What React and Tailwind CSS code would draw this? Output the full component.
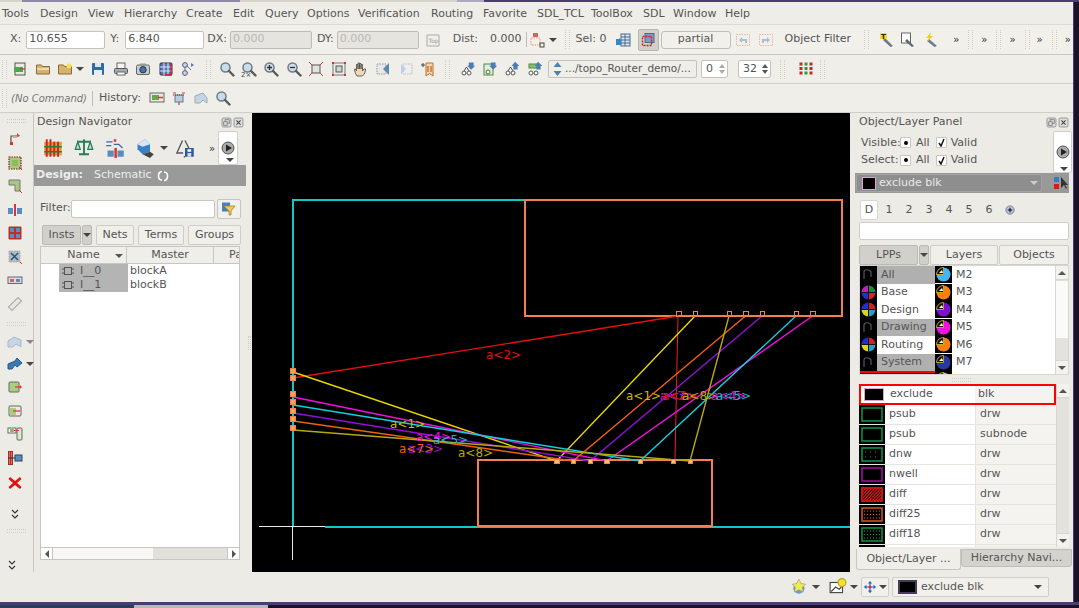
import React from "react";

const Svg = ({ children, s = 16, className = "" }) => (
  <svg width={s} height={s} viewBox="0 0 16 16" className={`shrink-0 ${className}`}>{children}</svg>
);

const Mag = ({ fill = "#c8dcec", extra }) => (
  <>
    <circle cx="6.5" cy="6.5" r="4.5" fill={fill} stroke="#6f7a84" strokeWidth="1.5" />
    <path d="M10 10l4.5 4.5" stroke="#5a5a5a" strokeWidth="2.4" strokeLinecap="round" />
    {extra}
  </>
);

const I = {
  doc: <><rect x="3" y="2" width="10" height="12" fill="#e8eae4" stroke="#555" /><rect x="2" y="6" width="9" height="5" fill="#4da84a" /><path d="M8 8h5" stroke="#c33" strokeWidth="1.2" /></>,
  folder: <><path d="M1.5 13V4h5l1 1.5h7V13z" fill="#d8b070" stroke="#8a6a3a" /><path d="M2 8h12" stroke="#efd9a8" strokeWidth="2" /></>,
  folderStar: <><path d="M1.5 13V4h5l1 1.5h7V13z" fill="#d8b070" stroke="#8a6a3a" /><circle cx="12" cy="5" r="2.5" fill="#f4e24a" /></>,
  floppy: <><rect x="2" y="2" width="12" height="12" rx="1" fill="#2f6aa8" /><rect x="5" y="2" width="6" height="4" fill="#dfe6ee" /><rect x="4" y="9" width="8" height="5" fill="#e9edf0" /></>,
  printer: <><rect x="4" y="2" width="8" height="6" fill="#f4f4f4" stroke="#666" /><rect x="1.5" y="7.5" width="13" height="5" rx="1" fill="#a8acb0" stroke="#555" /><rect x="4" y="11" width="8" height="3" fill="#fff" stroke="#666" /></>,
  camera: <><rect x="1.5" y="4" width="13" height="9.5" rx="1.5" fill="#c8ccd0" stroke="#666" /><circle cx="8" cy="8.7" r="3.2" fill="#3a78b8" stroke="#333" /><rect x="5" y="2.5" width="6" height="2" fill="#999" /></>,
  grid: <><rect x="2" y="2" width="12" height="12" rx="1" fill="#5a74b0" stroke="#334" /><path d="M6 2v12M10 2v12M2 6h12M2 10h12" stroke="#dfe6f4" /><path d="M13 3v11H7" stroke="#c22" strokeWidth="1.3" fill="none" /></>,
  hier: <><circle cx="5" cy="4" r="2.4" fill="#c8d8ea" stroke="#557" /><circle cx="5" cy="12" r="2.4" fill="#c8d8ea" stroke="#557" /><path d="M7 5l4 4M5 6.5v3" stroke="#667" /><path d="M11 2v4l3-2z" fill="#4a7db8" /></>,
  mag: <Mag />,
  mag2: <Mag extra={<text x="0" y="15.5" fontSize="7" fill="#444" fontFamily="DejaVu Sans">2×</text>} />,
  magP: <Mag extra={<path d="M4 6.5h5M6.5 4v5" stroke="#333" strokeWidth="1.3" />} />,
  magM: <Mag extra={<path d="M4 6.5h5" stroke="#333" strokeWidth="1.3" />} />,
  fit: <><rect x="4" y="4" width="8" height="8" fill="#dfe4dc" stroke="#555" /><path d="M1 1l3 3M15 1l-3 3M1 15l3-3M15 15l-3-3" stroke="#d33" /></>,
  fit2: <><rect x="2" y="2" width="12" height="12" fill="#eee" stroke="#777" /><rect x="5" y="5" width="6" height="6" fill="#cfd4cc" stroke="#555" /><path d="M1 1h2v2H1zM13 1h2v2h-2zM1 13h2v2H1zM13 13h2v2h-2z" fill="#d33" /></>,
  hand: <path d="M4 15c-2-3-2.500-5-2.500-7l1 0 1 2V3.500h1.500V8V2h1.500v6V2.500h1.500V8V3.500h1.500V10l1.500-2h1.500c0 3-1 5-3 7z" fill="#f0d8b4" stroke="#555" strokeWidth=".9" />,
  prev: <><rect x="2" y="3" width="9" height="10" fill="#e8e8e8" stroke="#999" strokeDasharray="1.500 1" /><path d="M14 2v12l-6-6z" fill="#5c86b4" /></>,
  next: <><rect x="5" y="3" width="9" height="10" fill="#eee" stroke="#bbb" strokeDasharray="1.500 1" /><path d="M3 3v10l5-5z" fill="#bcd0e2" /></>,
  mark: <><path d="M6 2h7v13l-3.500-2.500L6 15z" fill="#f4d8a8" stroke="#b8722a" /><path d="M1 4h4M3 2v4" stroke="#444" /><path d="M8 5v6M11 5v6" stroke="#c33" /></>,
  hdown: <><circle cx="4" cy="12" r="2" fill="#fff" stroke="#555" /><circle cx="9" cy="12" r="2" fill="#fff" stroke="#555" /><path d="M4 10l2.500-4L9 10" stroke="#555" fill="none" /><path d="M8 2h6v4h2l-5 5-5-5h2z" fill="#4a7db8" transform="scale(.8) translate(3 0)" /></>,
  hdown2: <><rect x="2" y="3" width="9" height="11" fill="#e6ecd8" stroke="#4a8a4a" /><circle cx="6" cy="11" r="2" fill="#fff" stroke="#2a7a2a" /><path d="M8 2h6v4h2l-5 5-5-5h2z" fill="#4a7db8" transform="scale(.8) translate(3 0)" /></>,
  hup: <><circle cx="4" cy="12" r="2" fill="#fff" stroke="#555" /><circle cx="9" cy="12" r="2" fill="#fff" stroke="#555" /><path d="M4 10l2.500-4L9 10" stroke="#555" fill="none" /><path d="M11 1l5 5h-2v4H9V6H7z" fill="#4a7db8" transform="scale(.85) translate(2 0)" /></>,
  hup2: <><rect x="2" y="3" width="9" height="4" fill="#8cc070" stroke="#4a8a4a" /><circle cx="4" cy="12" r="2" fill="#fff" stroke="#555" /><circle cx="9" cy="12" r="2" fill="#fff" stroke="#555" /><path d="M11 1l5 5h-2v4H9V6H7z" fill="#4a7db8" transform="scale(.85) translate(2 0)" /></>,
  dots: <>{[3, 7.500, 12].map((y) => [3, 8, 13].map((x, i) => <rect key={`${x}-${y}`} x={x - 1.5} y={y - 1.5} width="3" height="3" fill={i === 1 ? "#2a9a3a" : "#c02a20"} />))}</>,
  top: <><path d="M2 3h12M2 14h12M2 3v11M14 3v11" stroke="#aaa" /><text x="3.500" y="11" fontSize="6" fill="#999" fontFamily="DejaVu Sans">Top</text></>,
  layerT: <><rect x="3" y="1" width="5" height="4" fill="#d86060" /><rect x="1" y="6" width="9" height="7" fill="none" stroke="#d8a070" strokeDasharray="1.500 1" /><rect x="10" y="11" width="4" height="4" fill="none" stroke="#444" /></>,
  tile: <><rect x="6" y="2" width="9" height="12" fill="#dfe6ee" stroke="#4a6a90" /><path d="M6 5h9M6 8h9M6 11h9M10 2v12" stroke="#4a6a90" /><path d="M5 6v2H1v3h4v2l-4-3.500z" fill="#2f8ad0" /><rect x="1" y="7" width="5" height="6" fill="#2f8ad0" /></>,
  sel: <><rect x="5" y="1.500" width="9" height="9" fill="#7d9bc2" stroke="#4a6a90" /><rect x="2.500" y="4.500" width="9" height="9" fill="none" stroke="#c22" strokeWidth="1.4" strokeDasharray="2 1" /></>,
  undo: <><rect x="1.500" y="2.500" width="13" height="11" fill="none" stroke="#e8b8a0" strokeDasharray="1.500 1" /><path d="M4 8l3-3v2h5v4h-2V9H7v2z" fill="#a8c0d6" /></>,
  redo: <><rect x="1.500" y="2.500" width="13" height="11" fill="none" stroke="#e8b8a0" strokeDasharray="1.500 1" /><path d="M12 8L9 5v2H4v4h2V9h3v2z" fill="#a8c0d6" /></>,
  torchT: <><path d="M6 6l8 8-2.500 1L4 8z" fill="#6a7a8a" /><rect x="1" y="1" width="7" height="6" fill="#f0e020" /><text x="2" y="6.500" fontSize="7" fontWeight="bold" fill="#222" fontFamily="DejaVu Sans">T</text></>,
  torchS: <><rect x="1.500" y="1" width="9" height="10" fill="#fff" stroke="#666" /><path d="M7 7l7 7-2 1-7-6z" fill="#5a6a7a" /></>,
  torchL: <><path d="M6 7l8 7-2.500 1L4 9z" fill="#6a7a8a" /><path d="M8 0L3 6h3L4 10l6-6H7z" fill="#f0d020" /></>,
  hist1: <><rect x="1" y="3" width="14" height="9" fill="#e8e8e0" stroke="#666" /><rect x="3" y="5" width="7" height="5" fill="#66a84a" /><path d="M9 7.500h5" stroke="#d33" strokeWidth="1.5" /></>,
  hist2: <><rect x="4" y="5" width="8" height="7" fill="#b8cde0" stroke="#607890" /><path d="M2 3h3M11 3h3M8 12v3" stroke="#d33" strokeWidth="1.2" /><path d="M2 5h12" stroke="#444" strokeDasharray="1 1" /></>,
  hist3: <path d="M2 13V6l8-3 4 5v5l-4-3-3 3z" fill="#c4d6e4" stroke="#9ab" />,
  route: <><path d="M4 14V5h6" stroke="#555" strokeWidth="1.2" fill="none" /><path d="M3 11h3v3H3z" fill="#d33" /><path d="M10 2l3 3-3 1z" fill="#d33" /><path d="M6 5h4v2H6z" fill="#caa" /></>,
  green: <><rect x="2" y="2" width="12" height="12" fill="#a8c880" stroke="#7a1f1f" strokeDasharray="1.500 1" strokeWidth="1.2" /><rect x="5" y="5" width="6" height="6" fill="#8cbc5c" /><path d="M12 12l3 3" stroke="#d33" /></>,
  ell: <><path d="M2 2h11v11H8V7H2z" fill="#a8c880" stroke="#777" /><path d="M12 12l3 3" stroke="#d33" /></>,
  cut: <><rect x="1" y="6" width="5" height="6" fill="#5a8cc4" /><rect x="10" y="6" width="5" height="6" fill="#5a8cc4" /><path d="M8 2v12" stroke="#d33" strokeWidth="2" /></>,
  quad: <><rect x="1.500" y="1.500" width="13" height="13" rx="1" fill="#c42a2a" /><rect x="3" y="3" width="4" height="4" fill="#5a8cc4" /><rect x="9" y="3" width="4" height="4" fill="#5a8cc4" /><rect x="3" y="9" width="4" height="4" fill="#5a8cc4" /><rect x="9" y="9" width="4" height="4" fill="#5a8cc4" /></>,
  cross: <><rect x="2" y="2" width="11" height="11" fill="#a8bcd4" stroke="#c98" strokeDasharray="1.500 1" /><path d="M4 4l7 7M11 4l-7 7" stroke="#356" strokeWidth="1.500" /><path d="M13 13l2 2" stroke="#d33" /></>,
  chip: <><rect x="1" y="5" width="14" height="6.500" fill="#d8dce0" stroke="#667" /><rect x="3" y="7" width="4" height="3" fill="#c66" /><rect x="9" y="7" width="4" height="3" fill="#68a" /></>,
  ruler: <path d="M1.500 11L11 1.500l3.500 3.500L5 14.500z" fill="#e6e6e2" stroke="#888" />,
  undoB: <path d="M1 13V7l6-4 7 3v7l-5-3-3 3z" fill="#c6d6e4" stroke="#a8b8c8" />,
  redoB: <><path d="M1 13V8l7-3 2-3 5 5-5 4-2-2-3 4z" fill="#3a78b8" stroke="#245a90" /></>,
  out1: <><rect x="2" y="3" width="10" height="10" rx="1" fill="#a8cf80" stroke="#666" /><path d="M8 8h6" stroke="#e33" strokeWidth="1.300" /><path d="M13 6l2 2-2 2z" fill="#e33" /></>,
  out2: <><rect x="2" y="3" width="12" height="10" rx="1" fill="#e8e8e4" stroke="#666" /><rect x="3" y="5" width="6" height="7" fill="#a8cf80" /><path d="M6 8h7" stroke="#e33" strokeWidth="1.300" /></>,
  out3: <><rect x="1" y="2" width="8" height="5" fill="#fff" stroke="#666" /><rect x="10" y="2" width="5" height="12" rx="1" fill="#d8e8c8" stroke="#666" /><rect x="3" y="3" width="4" height="3" fill="#8cbc5c" /><path d="M7 4.500h5" stroke="#e33" /></>,
  out4: <><rect x="1.500" y="1.500" width="4" height="13" fill="#e08060" stroke="#933" /><path d="M3.500 1v14" stroke="#c22" strokeWidth="1.300" /><rect x="8" y="5" width="7" height="6" fill="#5a8cc4" stroke="#345" /><path d="M1 8h7" stroke="#333" /></>,
  x: <path d="M3 2l5 4 5-4 1.500 2L10 8l4.500 4-1.500 2-5-4-5 4-1.500-2L6 8 1.500 4z" fill="#dd1111" />,
  down: <path d="M5 3l3 3 3-3M5 8l3 3 3-3" stroke="#333" fill="none" strokeWidth="1.100" />,
  bars: <><rect x="1" y="3" width="14" height="11" fill="#d8a040" /><path d="M3 1v14M6 1v14M9 3v12M12 3v12" stroke="#c22" strokeWidth="1.500" /><path d="M1 7h14M1 11h14" stroke="#2a7a3a" strokeWidth="1.300" /></>,
  scale: <><path d="M8 1v12M3 3h10M4 13h8" stroke="#2a7a5a" strokeWidth="1.500" /><path d="M3 3l-2 6h4zM13 3l-2 6h4z" fill="#b8e0d0" stroke="#2a7a5a" /></>,
  net: <><path d="M1 3h5M1 6h4M7 5h4l3 3" stroke="#3a68a8" fill="none" /><rect x="7" y="1" width="2" height="2" fill="#d33" /><rect x="2" y="10" width="5" height="5" fill="#5a8cc4" /><rect x="10" y="10" width="5" height="5" fill="#5a8cc4" /><path d="M8.500 8v8" stroke="#d33" strokeWidth="2" /></>,
  cube: <><path d="M2 5l6-4 4 4 0 6-6 2-4-4z" fill="#3a80c8" /><path d="M6 13l6-2 3 2-3 3z" fill="#444" /><path d="M2 5l6-4 4 4-6 2z" fill="#d8e6f4" /></>,
  recycle: <><path d="M6 2L1.500 12h5M8 2l3 6M8 15h-1" stroke="#556" fill="none" strokeWidth="1.100" /><rect x="8" y="8" width="7" height="7" fill="#2f5a98" /><rect x="10" y="9" width="3" height="2" fill="#fff" /><rect x="10" y="12" width="3" height="3" fill="#cde" /></>,
  play: <><circle cx="8" cy="8" r="6" fill="#aaa" stroke="#555" /><path d="M6 4.500l6 3.500-6 3.500z" fill="#222" /></>,
  filter: <><rect x="1" y="1.500" width="8" height="9" fill="#4a80b8" /><path d="M3 5h11l-4 5v4H8v-4z" fill="#f0c860" stroke="#a88030" strokeWidth=".8" /></>,
  cursor: <><rect x="1" y="2" width="5" height="5" fill="#3a78c8" /><rect x="1" y="9" width="5" height="5" fill="#e01818" /><path d="M8 2v11l3-3 2 4 1-1-2-3h3z" fill="#333" /></>,
  plus: <><circle cx="8" cy="8" r="5.500" fill="#b4c8e4" stroke="#667" /><path d="M5 8h6M8 5v6" stroke="#111" strokeWidth="1.500" /></>,
  starG: <><circle cx="7" cy="9" r="5" fill="#6a9ad0" /><path d="M7 1l2 4 4 .5-3 3 1 4-4-2-4 2 1-4-3-3 4-.5z" fill="#f2ea4a" stroke="#999" strokeWidth=".6" /></>,
  bulb: <><rect x="1" y="4" width="11" height="9" fill="#fff" stroke="#444" /><path d="M2 12l4-4 3 2 2-2" stroke="#444" fill="none" /><circle cx="11.500" cy="4" r="3.500" fill="#f2e030" stroke="#b8a020" /></>,
  cross4: <><path d="M8 1l2.500 3h-5zM8 15l2.500-3h-5zM1 8l3-2.500v5zM15 8l-3-2.500v5z" fill="#2a5fd0" /><path d="M8 3v10M3 8h10" stroke="#2a5fd0" strokeWidth="1.400" /><circle cx="8" cy="8" r="1.800" fill="#d33" /></>,
  float: <><rect x="1.500" y="1.500" width="13" height="13" rx="2" fill="#ddd" stroke="#777" /><rect x="6" y="4" width="6" height="5" fill="none" stroke="#666" /><rect x="4" y="7" width="5" height="5" fill="#ddd" stroke="#666" /></>,
  close: <><rect x="1.500" y="1.500" width="13" height="13" rx="2" fill="#ddd" stroke="#777" /><path d="M5 5l6 6M11 5l-6 6" stroke="#444" strokeWidth="1.500" /></>,
};

const Ic = ({ n, s = 16, w, className = "" }) => (
  <span className={`flex justify-center shrink-0 ${className}`} style={w ? { width: w } : undefined}>
    <Svg s={s}>{I[n]}</Svg>
  </span>
);

const Caret = ({ c = "border-t-[#444]", className = "" }) => (
  <span className={`w-0 h-0 border-x-[4px] border-x-transparent border-t-[4px] shrink-0 ${c} ${className}`} />
);

const GripV = ({ className = "" }) => <span className={`w-[5px] h-[19px] shrink-0 border-x border-dotted border-[#cfccc6] ${className}`} />;
const GripH = ({ className = "" }) => <span className={`h-[4px] w-[19px] shrink-0 border-y border-dotted border-[#cfccc6] ${className}`} />;

const T = ({ children, className = "" }) => <span className={`whitespace-nowrap shrink-0 ${className}`}>{children}</span>;

const Field = ({ w, v, disabled, className = "" }) => (
  <span className={`flex items-center h-[18px] rounded-[2px] border px-[2px] shrink-0 ${disabled ? "bg-[#e6e4df] border-[#bdbbb6] text-[#b8b8b4]" : "bg-white border-[#c4c2bc] text-[#555]"} ${className}`} style={{ width: w }}>{v}</span>
);

const Btn = ({ children, w, active, className = "" }) => (
  <span className={`flex items-center justify-center h-[20px] rounded-[2px] border shrink-0 ${active ? "bg-[#d2d0cb] border-[#bbb9b3]" : "bg-[#f1efea] border-[#cfcdc7]"} ${className}`} style={{ width: w }}>{children}</span>
);

const menus = [["Tools", 2], ["Design", 40], ["View", 88], ["Hierarchy", 124], ["Create", 186], ["Edit", 233], ["Query", 265], ["Options", 307], ["Verification", 358], ["Routing", 431], ["Favorite", 483], ["SDL_TCL", 537], ["ToolBox", 591], ["SDL", 643], ["Window", 673], ["Help", 725]];

const leftIcons = ["route", "green", "ell", "cut", "quad", "cross", "chip", "ruler"];
const leftIcons2 = ["out1", "out2", "out3", "out4", "x"];

const Pie = ({ c, wedge = "#111" }) => (
  <svg width="17" height="17" viewBox="0 0 17 17" className="shrink-0">
    <rect width="17" height="17" fill="#000" />
    <circle cx="8.500" cy="8.500" r="7" fill={c} />
    <path d="M8.500 8.500V1.500A7 7 0 0 0 1.500 8.500z" fill={wedge} stroke="#d8c020" strokeWidth=".8" />
    <path d="M4 7l3-3 1 3z" fill="#fff" />
  </svg>
);
const Arc = () => (
  <svg width="17" height="17" viewBox="0 0 17 17" className="shrink-0">
    <rect width="17" height="17" fill="#000" />
    <path d="M4 13V6c0-3 6-3 7 0v5" stroke="#556" strokeWidth="1.200" fill="none" />
  </svg>
);
const Multi = () => (
  <svg width="17" height="17" viewBox="0 0 17 17" className="shrink-0">
    <rect width="17" height="17" fill="#000" />
    <path d="M8.500 8.500V1.500A7 7 0 0 1 15.500 8.500z" fill="#1a8a3a" />
    <path d="M8.500 8.500H15.500A7 7 0 0 1 8.500 15.500z" fill="#e02020" />
    <path d="M8.500 8.500V15.500A7 7 0 0 1 1.500 8.500z" fill="#2030d0" />
    <path d="M8.500 8.500H1.500A7 7 0 0 1 8.500 1.500z" fill="#c020c0" />
    <path d="M1.500 8.500h14M8.500 1.500v14" stroke="#111" />
  </svg>
);
const Multi2 = () => (
  <svg width="17" height="17" viewBox="0 0 17 17" className="shrink-0">
    <rect width="17" height="17" fill="#000" />
    <path d="M8.500 8.500V1.500A7 7 0 0 1 15.500 8.500z" fill="#d02020" />
    <path d="M8.500 8.500H15.500A7 7 0 0 1 8.500 15.500z" fill="#20a0d0" />
    <path d="M8.500 8.500V15.500A7 7 0 0 1 1.500 8.500z" fill="#e0d020" />
    <path d="M8.500 8.500H1.500A7 7 0 0 1 8.500 1.500z" fill="#2030d0" />
    <path d="M1.500 8.500h14M8.500 1.500v14" stroke="#111" />
  </svg>
);

const lpp = [
  ["All", <Arc />, 1], ["Base", <Multi />], ["Design", <Multi2 />], ["Drawing", <Arc />, 1], ["Routing", <Multi2 />], ["System", <Arc />, 1],
];
const metals = [["M2", "#40b8f8"], ["M3", "#f88010"], ["M4", "#8010d0"], ["M5", "#f010e0"], ["M6", "#f88010"], ["M7", "#2838a0"], ["M8", "#e0d020"]];

const Swatch = ({ c, p }) => (
  <span className="flex items-center justify-center w-[26px] h-[19px] bg-black shrink-0">
    <svg width="22" height="15" viewBox="0 0 22 15">
      {p === "hatch" && Array.from({ length: 12 }).map((_, i) => <path key={i} d={`M${i * 3 - 14} 15L${i * 3} 0`} stroke={c} strokeWidth="1.300" />)}
      {p === "dots" && [4, 7.500, 11].map((y) => <path key={y} d={`M3 ${y}H19`} stroke={c} strokeDasharray="1 2" />)}
      {p === "sparse" && [5, 10].map((y) => <path key={y} d={`M4 ${y}H18`} stroke={c} strokeDasharray="1 4" />)}
      <rect x="1" y="1" width="20" height="13" fill="none" stroke={c} strokeWidth="1.400" />
    </svg>
  </span>
);

const rows = [
  ["psub", "drw", "#10a050"], ["psub", "subnode", "#10a050"], ["dnw", "drw", "#10a050", "sparse"], ["nwell", "drw", "#b010b0"],
  ["diff", "drw", "#e01818", "hatch"], ["diff25", "drw", "#e06020", "dots"], ["diff18", "drw", "#10a050", "dots"], ["", "", "#b010b0"],
];

const ScrollV = ({ thumbH, thumbTop }) => (
  <div className="w-[13px] shrink-0 flex flex-col border-l border-[#d8d6d0] bg-[#f4f2ee]">
    <div className="h-[14px] flex items-center justify-center border-b border-[#d8d6d0]"><span className="w-0 h-0 border-x-[4px] border-x-transparent border-b-[4px] border-b-[#555]" /></div>
    <div className="flex-1 min-h-0 flex flex-col">
      <div style={{ height: thumbTop }} className="bg-[#fafaf8] border-b border-[#e0ded8]" />
      <div style={{ height: thumbH }} className="bg-[#fafaf8]" />
      <div className="flex-1 bg-[#e4e2dd]" />
    </div>
    <div className="h-[14px] flex items-center justify-center border-t border-[#d8d6d0]"><Caret c="border-t-[#555]" /></div>
  </div>
);

const topPins = [678.5, 695, 729, 745.5, 762, 796, 812.5];
const botPins = [556.5, 573, 590, 606.5, 640, 673, 690];
const leftPins = [371, 378, 394, 402, 411, 419, 428];

const Canvas = () => (
  <svg width="598" height="459" viewBox="252 113 598 459" className="block bg-black shrink-0" shapeRendering="crispEdges" style={{ fontFamily: "'DejaVu Sans', sans-serif" }}>
    <path d="M292.500 526V199.500H525" stroke="#10c8c8" fill="none" strokeWidth="2" />
    <path d="M325 526.500H850" stroke="#10c8c8" strokeWidth="2" />
    <path d="M711.500 459V526" stroke="#10c8c8" strokeWidth="2" />
    <path d="M259 526.500H325M292.500 526V560" stroke="#e8e8e8" />
    <rect x="525" y="199.500" width="317" height="116" fill="none" stroke="#f08050" strokeWidth="2" />
    <rect x="477.500" y="459.500" width="234" height="66.500" fill="none" stroke="#f08050" strokeWidth="2" />
    <g fill="none" strokeWidth="1.400" shapeRendering="auto">
      <path d="M293 378L678.500 316" stroke="#e01010" />
      <path d="M678 316L675 459" stroke="#f02020" strokeWidth="1" />
      <path d="M293 372L556.500 461L695 316" stroke="#e8d800" />
      <path d="M293 397L606.500 461L812.500 316" stroke="#f010e0" />
      <path d="M293 405L640 461L796 316" stroke="#10d0e0" />
      <path d="M293 413L590 461L762 316" stroke="#9010d8" />
      <path d="M293 421L573 461L745.500 316" stroke="#f06010" />
      <path d="M293 430L690 461L729 316" stroke="#b8a810" />
    </g>
    {topPins.map((x) => <rect key={x} x={x - 2} y="311.500" width="4.500" height="4.500" fill="none" stroke="#f08050" />)}
    {botPins.map((x) => <rect key={x} x={x - 2} y="459" width="4.500" height="4.500" fill="#f8c070" stroke="#f08050" />)}
    {leftPins.map((y) => <rect key={y} x="290" y={y - 2.5} width="5" height="5" fill="#f8a060" stroke="#f08050" />)}
    <g fontSize="12" shapeRendering="auto">
      <text x="486" y="359" fill="#e01010">a&lt;2&gt;</text>
      <text x="390" y="428" fill="#c8b800">a&lt;1&gt;</text>
      <text x="416" y="441" fill="#f010e0">a&lt;4&gt;</text>
      <text x="433" y="444" fill="#10b8c8">a&lt;5&gt;</text>
      <text x="408" y="453" fill="#9010d8">a&lt;3&gt;</text>
      <text x="399" y="453" fill="#e86010">a&lt;7&gt;</text>
      <text x="458" y="457" fill="#b8a810">a&lt;8&gt;</text>
      <text x="626" y="400" fill="#c8b800">a&lt;1&gt;</text>
      <text x="660" y="400" fill="#e86010">a&lt;7&gt;</text>
      <text x="660" y="400" fill="#9010d8">a&lt;3&gt;</text>
      <text x="662" y="400" fill="#e01010">a&lt;2&gt;</text>
      <text x="682" y="400" fill="#b8a810">a&lt;8&gt;</text>
      <text x="711" y="400" fill="#f010e0">a&lt;4&gt;</text>
      <text x="716" y="400" fill="#10b8c8">a&lt;5&gt;</text>
    </g>
  </svg>
);

export default function App() {
  return (
    <div className="relative w-[1079px] h-[608px] overflow-hidden bg-[#1a1226] text-[11px] text-[#555]" style={{ fontFamily: "'DejaVu Sans', sans-serif" }}>
      <div className="flex h-[2px] bg-[#d8d4cc]">
        <div className="w-[22px]" />
        <div className="w-[218px] bg-[#9088a8]" />
        <div className="w-[217px]" />
        <div className="w-[27px] bg-[#b0a8c0]" />
        <div className="flex-1 bg-[#4d3d6e]" />
      </div>
      <div className="flex flex-col w-[1074px] h-[600px] bg-[#edebe6] border-r border-[#4d3d6e]">
        {/* menu */}
        <div className="relative h-[23px] border-b border-[#dcdad4] bg-[#efede8] shrink-0">
          {menus.map(([m, x]) => <span key={m} className="absolute top-[4px] whitespace-nowrap" style={{ left: x }}>{m}</span>)}
        </div>
        {/* toolbar 1 */}
        <div className="flex items-center h-[30px] border-b border-[#c8c6c0] bg-[#f2f0eb] shrink-0 pl-[10px]">
          <T>X:</T><Field w={79} v="10.655" className="ml-[5px]" />
          <T className="ml-[5px]">Y:</T><Field w={79} v="6.840" className="ml-[6px]" />
          <T className="ml-[3px]">DX:</T><Field w={82} v="0.000" disabled className="ml-[3px]" />
          <T className="ml-[5px]">DY:</T><Field w={82} v="0.000" disabled className="ml-[3px]" />
          <Ic n="top" w={16} className="ml-[6px]" />
          <T className="ml-[12px]">Dist:</T><T className="ml-[12px]">0.000</T>
          <span className="w-px h-[15px] bg-[#bbb] ml-[4px]" />
          <Ic n="layerT" w={16} className="ml-[3px]" />
          <Caret className="ml-[3px]" />
          <GripV className="ml-[8px]" />
          <T className="ml-[6px]">Sel: 0</T>
          <Ic n="tile" w={16} className="ml-[8px]" />
          <span className="flex items-center justify-center w-[21px] h-[22px] ml-[7px] rounded-[2px] bg-[#d2d0cb] border border-[#b8b6b0] shrink-0"><Svg>{I.sel}</Svg></span>
          <span className="flex items-center justify-center w-[70px] h-[18px] ml-[2px] rounded-[3px] bg-[#f2f0eb] border border-[#c0beb8] shrink-0">partial</span>
          <Ic n="undo" w={16} className="ml-[4px]" />
          <Ic n="redo" w={16} className="ml-[7px]" />
          <T className="ml-[11px]">Object Filter</T>
          <GripV className="ml-[13px]" />
          <Ic n="torchT" w={16} className="ml-[10px]" />
          <Ic n="torchS" w={16} className="ml-[5px]" />
          <Ic n="torchL" w={16} className="ml-[7px]" />
          <T className="ml-[14px] text-[10px] text-[#333]">»</T>
          <GripV className="ml-[9px]" />
          <T className="ml-[8px] text-[10px] text-[#333]">»</T>
          <GripV className="ml-[9px]" />
          <T className="ml-[8px] text-[10px] text-[#333]">»</T>
          <GripV className="ml-[9px]" />
          <T className="ml-[7px] text-[10px] text-[#333]">»</T>
          <GripV className="ml-[9px]" />
          <T className="ml-[8px] text-[10px] text-[#333]">»</T>
        </div>
        {/* toolbar 2 */}
        <div className="flex items-center h-[29px] border-b border-[#d0cec8] bg-[#f0eee9] shrink-0 pl-[2px]">
          <GripV className="mr-[2px]" />
          {["doc", "folder"].map((n) => <Ic key={n} n={n} w={22.5} />)}
          <Ic n="folderStar" w={22} />
          <Caret />
          <span className="w-[3px]" />
          {["floppy", "printer", "camera", "grid", "hier"].map((n) => <Ic key={n} n={n} w={22.5} />)}
          <GripV className="ml-[6px] mr-[5px]" />
          {["mag", "mag2", "magP", "magM", "fit", "fit2", "hand", "prev", "next", "mark"].map((n) => <Ic key={n} n={n} w={22.4} />)}
          <GripV className="ml-[6px] mr-[6px]" />
          {["hdown", "hdown2", "hup", "hup2"].map((n) => <Ic key={n} n={n} w={22.4} />)}
          <span className="flex items-center w-[149px] h-[18px] ml-[2px] rounded-[2px] border border-[#c4c2bc] bg-[#f0eee9] px-[4px] gap-[3px] shrink-0 overflow-hidden">
            <svg width="9" height="14" viewBox="0 0 9 14" className="shrink-0"><path d="M4.500 0l4 5H.5zM4.500 14l4-5H.5z" fill="#4a80b8" /></svg>
            <T className="text-[#555] text-[10.500px]">.../topo_Router_demo/...</T>
          </span>
          <span className="flex items-center justify-between w-[27px] h-[18px] ml-[4px] pl-[4px] pr-[2px] rounded-[2px] border border-[#c4c2bc] bg-white shrink-0">0<span className="flex flex-col gap-[2px]"><span className="w-0 h-0 border-x-[3px] border-x-transparent border-b-[4px] border-b-[#aaa]" /><span className="w-0 h-0 border-x-[3px] border-x-transparent border-t-[4px] border-t-[#aaa]" /></span></span>
          <span className="flex items-center justify-between w-[33px] h-[18px] ml-[10px] pl-[4px] pr-[2px] rounded-[2px] border border-[#c4c2bc] bg-white shrink-0">32<span className="flex flex-col gap-[2px]"><span className="w-0 h-0 border-x-[3px] border-x-transparent border-b-[4px] border-b-[#555]" /><span className="w-0 h-0 border-x-[3px] border-x-transparent border-t-[4px] border-t-[#555]" /></span></span>
          <GripV className="ml-[9px]" />
          <Ic n="dots" w={16} className="ml-[13px]" />
          <GripV className="ml-[6px]" />
        </div>
        {/* toolbar 3 */}
        <div className="flex items-center h-[29px] border-b border-[#d0cec8] bg-[#f0eee9] shrink-0 pl-[2px]">
          <GripV />
          <T className="ml-[4px] w-[80px] italic text-[#777] text-[10px]">(No Command)</T>
          <span className="w-px h-[15px] bg-[#bbb] ml-[1px]" />
          <T className="ml-[6px]">History:</T>
          <Ic n="hist1" w={16} className="ml-[8px]" />
          <Ic n="hist2" w={16} className="ml-[6px]" />
          <Ic n="hist3" w={16} className="ml-[6px]" />
          <Ic n="mag" w={16} className="ml-[6px]" />
        </div>
        {/* main */}
        <div className="flex h-[459px] shrink-0">
          {/* left strip */}
          <div className="flex flex-col items-start w-[34px] border-r border-[#c8c6c0] pl-[7px] pt-[6px] shrink-0">
            <GripH className="mb-[7px]" />
            {leftIcons.map((n, i) => <Ic key={n} n={n} className={i ? "mt-[7.500px]" : "mt-[1px]"} />)}
            <GripH className="mt-[10px]" />
            <span className="flex items-center gap-[3px] mt-[8px]"><Svg>{I.undoB}</Svg><Caret c="border-t-[#888]" /></span>
            <span className="flex items-center gap-[3px] mt-[6px]"><Svg>{I.redoB}</Svg><Caret /></span>
            {leftIcons2.map((n, i) => <Ic key={n} n={n} className={i === 4 ? "mt-[9px]" : "mt-[7.500px]"} />)}
            <Ic n="down" className="mt-[16px]" />
            <GripH className="mt-[6px]" />
            <Ic n="down" className="mt-[25px] -ml-[3px]" />
          </div>
          {/* navigator */}
          <div className="flex flex-col w-[212px] shrink-0">
            <div className="flex items-center h-[18px] pt-[1px] pl-[3px] pr-[2px] shrink-0">
              <T>Design Navigator</T>
              <span className="flex-1" />
              <Svg s={11}>{I.float}</Svg><Svg s={11} className="ml-[1px]">{I.close}</Svg>
            </div>
            <div className="flex items-center h-[34px] shrink-0">
              <Ic n="bars" s={20} w={36} className="ml-[1px]" />
              <Ic n="scale" s={20} w={26} />
              <Ic n="net" s={20} w={36} />
              <Ic n="cube" s={20} w={24} />
              <Caret className="ml-[3px]" />
              <Ic n="recycle" s={20} w={24} className="ml-[5px]" />
              <T className="ml-[12px] text-[10px] text-[#333]">»</T>
              <span className="relative flex items-center justify-center w-[20px] h-[34px] ml-[3px] rounded-[2px] bg-white border border-[#d0cec8] shrink-0"><Svg>{I.play}</Svg><Caret className="absolute bottom-[2px] right-[3px]" /></span>
            </div>
            <div className="flex items-center h-[21px] bg-[#9a9a9a] text-[#eee] shrink-0 pl-[2px]">
              <T className="font-bold">Design:</T><T className="ml-[11px]">Schematic</T>
              <svg width="12" height="12" viewBox="0 0 12 12" className="ml-[5px] shrink-0"><path d="M5 1.500C2 1.500 1.500 4 1.500 6S2.500 10 5 10M7 10.500c3 0 3.500-2.500 3.500-4.500S9.500 2 7 2" stroke="#fff" strokeWidth="1.600" fill="none" /></svg>
            </div>
            <div className="flex items-center mt-[14px] h-[17px] shrink-0 pl-[6px]">
              <T>Filter:</T>
              <span className="w-[144px] h-[18px] bg-white rounded-[2px] border border-[#c8c6c0] shrink-0" />
              <span className="flex items-center justify-center w-[24px] h-[20px] ml-[2px] bg-[#f2f0eb] border border-[#c8c6c0] rounded-[2px] shrink-0"><Svg>{I.filter}</Svg></span>
            </div>
            <div className="flex items-center mt-[8px] h-[20px] shrink-0 pl-[8px]">
              <Btn w={39} active>Insts</Btn>
              <span className="flex items-center justify-center w-[10px] h-[20px] ml-[1px] bg-[#d2d0cb] border border-[#bbb9b3] rounded-[2px] shrink-0"><Caret /></span>
              <Btn w={38} className="ml-[4px]">Nets</Btn>
              <Btn w={46} className="ml-[4px]">Terms</Btn>
              <Btn w={53} className="ml-[4px]">Groups</Btn>
            </div>
            <div className="flex flex-col ml-[6px] mt-[1px] w-[200px] h-[314px] bg-white border border-[#c8c6c0] shrink-0 overflow-hidden">
              <div className="flex items-center h-[17px] bg-[#f0eee9] border-b border-[#c8c6c0] shrink-0">
                <span className="relative flex items-center justify-center w-[86px] h-full border-r border-[#c8c6c0] shrink-0">Name<Caret className="absolute right-[3px] top-[7px]" c="border-t-[#555]" /></span>
                <span className="flex items-center justify-center w-[87px] h-full border-r border-[#c8c6c0] shrink-0">Master</span>
                <span className="pl-[15px]">Pa</span>
              </div>
              {[["I__0", "blockA"], ["I__1", "blockB"]].map(([a, b]) => (
                <div key={a} className="flex items-center h-[14px] shrink-0">
                  <span className="flex items-center w-[69px] h-full ml-[18px] bg-[#b4b4b4] shrink-0">
                    <svg width="12" height="10" viewBox="0 0 12 10" className="ml-[3px] shrink-0"><rect x="2.500" y="1.500" width="7" height="7" fill="none" stroke="#555" /><path d="M0 3h2M0 7h2M10 3h2M10 7h2" stroke="#555" /></svg>
                    <span className="ml-[6px]">{a}</span>
                  </span>
                  <span className="ml-[2px]">{b}</span>
                </div>
              ))}
              <div className="flex-1" />
              <div className="flex h-[12px] border-t border-[#c8c6c0] shrink-0">
                <span className="flex items-center justify-center w-[12px] border-r border-[#c8c6c0]"><span className="w-0 h-0 border-y-[4px] border-y-transparent border-r-[4px] border-r-[#555]" /></span>
                <span className="w-[100px] bg-[#f8f7f4]" />
                <span className="flex-1 bg-[#e2e0db]" />
                <span className="flex items-center justify-center w-[12px] border-l border-[#c8c6c0]"><span className="w-0 h-0 border-y-[4px] border-y-transparent border-l-[4px] border-l-[#555]" /></span>
              </div>
            </div>
          </div>
          {/* splitter */}
          <div className="flex items-center justify-center w-[6px] shrink-0"><span className="w-[3px] h-[14px] border-x border-dotted border-[#ccc]" /></div>
          <Canvas />
          {/* right panel */}
          <div className="flex flex-col w-[222px] shrink-0">
            <div className="flex items-center h-[18px] pt-[1px] pl-[9px] pr-[3px] shrink-0">
              <T>Object/Layer Panel</T><span className="flex-1" />
              <Svg s={11}>{I.float}</Svg><Svg s={11} className="ml-[1px]">{I.close}</Svg>
            </div>
            <div className="flex h-[42px] shrink-0">
              <div className="flex flex-col w-[203px] pl-[11px] shrink-0">
                {["Visible:", "Select:"].map((l) => (
                  <div key={l} className="flex items-center h-[17.500px] first:mt-[3px]">
                    <T className="w-[39px]">{l}</T>
                    <span className="flex items-center justify-center w-[11px] h-[11px] bg-white border border-[#c8c6c0] rounded-[1px] shrink-0"><span className="w-[4px] h-[4px] rounded-full bg-black" /></span>
                    <T className="ml-[5px]">All</T>
                    <span className="flex items-center justify-center w-[11px] h-[11px] ml-[6px] bg-white border border-[#c8c6c0] rounded-[1px] shrink-0"><svg width="9" height="9" viewBox="0 0 9 9"><path d="M2 5l2 3 3-7" stroke="#111" strokeWidth="1.500" fill="none" /></svg></span>
                    <T className="ml-[4px]">Valid</T>
                  </div>
                ))}
              </div>
              <span className="relative flex items-center justify-center w-[19px] h-[42px] rounded-[2px] bg-white border border-[#d0cec8] shrink-0"><Svg>{I.play}</Svg><Caret className="absolute bottom-[1px] right-[3px]" /></span>
            </div>
            <div className="flex items-center h-[20px] ml-[5px] w-[214px] bg-[#999] shrink-0">
              <span className="flex items-center w-[186px] h-[18px] ml-[1px] bg-[#8e8e8e] rounded-[2px] border border-[#a4a4a4] shrink-0 pl-[5px] text-[#eee]">
                <span className="w-[14px] h-[13px] bg-black border border-[#e0a0d0] shrink-0" />
                <T className="ml-[3px] text-[#e8e8e8]">exclude blk</T>
                <span className="flex-1" /><Caret c="border-t-[#ccc]" className="mr-[3px]" />
              </span>
              <Ic n="cursor" w={16} className="ml-[11px]" />
            </div>
            <div className="flex items-center h-[20px] mt-[7px] ml-[10px] shrink-0">
              <span className="flex items-center justify-center w-[18px] h-[20px] bg-white border border-[#d8d6d0] rounded-[2px] shrink-0">D</span>
              {["1", "2", "3", "4", "5", "6"].map((d, i) => <span key={d} className={`flex justify-center w-[20px] shrink-0 ${i === 0 ? "ml-[1px]" : ""}`}>{d}</span>)}
              <Svg s={12} className="ml-[5px]">{I.plus}</Svg>
            </div>
            <div className="h-[18px] mt-[2px] ml-[9px] w-[210px] bg-white border border-[#d0cec8] rounded-[2px] shrink-0" />
            <div className="flex items-center h-[20px] mt-[5px] ml-[9px] shrink-0">
              <Btn w={59} active>LPPs</Btn>
              <span className="flex items-center justify-center w-[10px] h-[20px] ml-[1px] bg-[#d2d0cb] border border-[#bbb9b3] rounded-[2px] shrink-0"><Caret /></span>
              <Btn w={68} className="ml-[1px]">Layers</Btn>
              <Btn w={70} className="ml-[1px]">Objects</Btn>
            </div>
            <div className="flex h-[110px] ml-[9px] w-[210px] bg-white border border-[#d8d6d0] overflow-hidden shrink-0">
              <div className="flex flex-col w-[75px] shrink-0">
                {lpp.map(([l, ic, sel]) => (
                  <div key={l} className="flex items-center h-[17.500px] shrink-0">
                    <span className="flex items-center justify-center w-[17px] h-full bg-black shrink-0">{ic}</span>
                    <span className={`flex items-center flex-1 h-full pl-[4px] ${sel ? "bg-[#b0b0b0]" : ""}`}>{l}</span>
                  </div>
                ))}
                <div className="h-[5px] border-t-2 border-[#f00] shrink-0 bg-black" />
              </div>
              <div className="flex flex-col flex-1">
                {metals.map(([m, c]) => (
                  <div key={m} className="flex items-center h-[17.500px] shrink-0">
                    <Pie c={c} /><span className="ml-[4px]">{m}</span>
                  </div>
                ))}
              </div>
              <ScrollV thumbTop={0} thumbH={57} />
            </div>
            <div className="flex items-center justify-center h-[9px] shrink-0"><GripH className="h-[3px]" /></div>
            <div className="flex h-[163px] ml-[9px] w-[210px] bg-white overflow-hidden shrink-0">
              <div className="flex flex-col flex-1 min-w-0">
                <div className="flex items-center h-[21px] border-2 border-[#f00] shrink-0">
                  <span className="flex items-center justify-center w-[25px] h-full bg-white shrink-0"><span className="w-[20px] h-[13px] bg-black border border-[#d0a8d0]" /></span>
                  <span className="w-[89px] pl-[4px] shrink-0">exclude</span>
                  <span className="pl-[3px] flex-1 bg-[#f4f3f0] h-full flex items-center">blk</span>
                </div>
                {rows.map(([a, b, c, p], i) => (
                  <div key={i} className="flex items-center h-[20px] border-b border-[#e6e4df] shrink-0">
                    <Swatch c={c} p={p} />
                    <span className="w-[90px] pl-[4px] shrink-0">{a}</span>
                    <span className="pl-[4px] flex-1 bg-[#f4f3f0] h-full flex items-center border-l border-[#e6e4df]">{b}</span>
                  </div>
                ))}
              </div>
              <ScrollV thumbTop={0} thumbH={0} />
            </div>
            <div className="flex mt-[2px] ml-[6px] h-[22px] shrink-0">
              <span className="flex items-center justify-center w-[105px] h-[21px] bg-[#f0eee9] border border-[#c8c6c0] border-t-0 rounded-b-[3px] shrink-0">Object/Layer ...</span>
              <span className="flex items-center justify-center w-[111px] h-[18px] bg-[#d4d2cd] border border-[#c0beb8] rounded-b-[3px] shrink-0">Hierarchy Navi...</span>
            </div>
          </div>
        </div>
        {/* status */}
        <div className="flex items-center justify-end flex-1 min-h-0 pr-[24px]">
          <Ic n="starG" s={18} w={18} />
          <Caret className="ml-[3px]" />
          <Ic n="bulb" s={18} w={18} className="ml-[9px]" />
          <Caret className="ml-[3px]" />
          <span className="flex items-center justify-center gap-[2px] w-[28px] h-[20px] ml-[3px] bg-[#f2f0eb] border border-[#d0cec8] rounded-[2px] shrink-0"><Svg s={14}>{I.cross4}</Svg><Caret /></span>
          <span className="flex items-center w-[157px] h-[20px] ml-[3px] bg-[#f2f0eb] border border-[#d0cec8] rounded-[2px] pl-[5px] shrink-0">
            <span className="w-[19px] h-[14px] bg-black border-2 border-[#4a3a5a] shrink-0" />
            <T className="ml-[4px]">exclude blk</T>
            <span className="flex-1" /><Caret className="mr-[6px]" />
          </span>
        </div>
      </div>
      {/* bottom desktop strip */}
      <div className="flex flex-col h-[6px]">
        <div className="h-[3px] bg-[#4d3d6e]" />
        <div className="flex flex-1">
          <div className="w-[134px] bg-[#2a3f52]" />
          <div className="w-[134px] bg-[#b8b8b8]" />
          <div className="flex-1 bg-[#1a1226]" />
        </div>
      </div>
    </div>
  );
}
